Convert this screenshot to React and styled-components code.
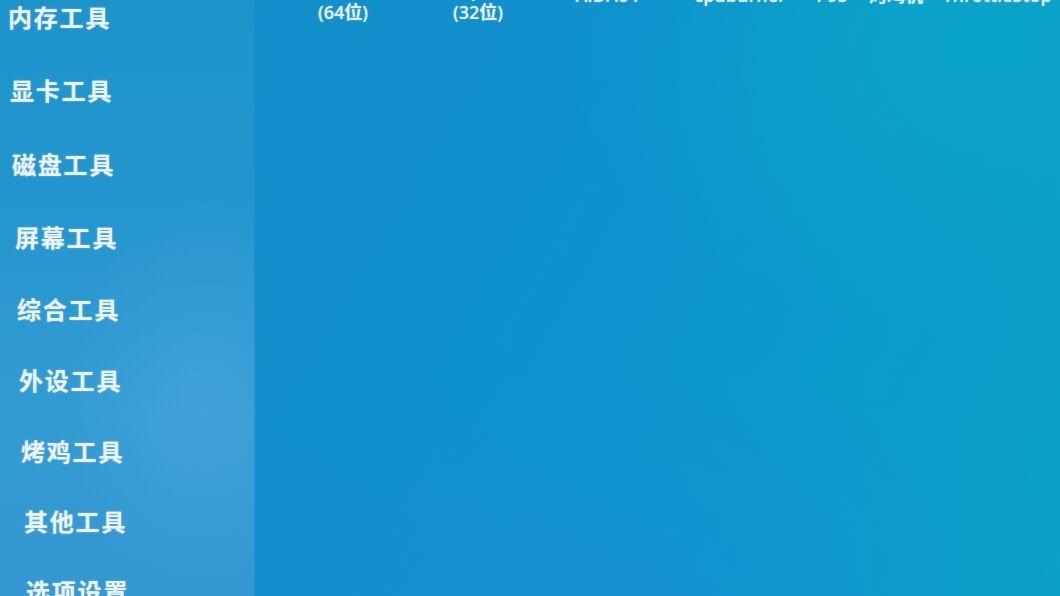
import React from "react";
import styled, { createGlobalStyle } from "styled-components";

const Global = createGlobalStyle`
  html, body { margin: 0; padding: 0; height: 100%; overflow: hidden; }
  body { background: #1190cb; }
  #root { height: 100%; }
`;

const Screen = styled.div`
  width: 1060px;
  height: 596px;
  display: flex;
  overflow: hidden;
  font-family: "Noto Sans CJK SC", "Noto Sans", sans-serif;
  background:
    radial-gradient(ellipse 420px 300px at 980px 40px, rgba(10, 166, 200, 0.85), rgba(10, 166, 200, 0) 100%),
    radial-gradient(ellipse 500px 260px at 620px 620px, rgba(28, 140, 210, 0.55), rgba(28, 140, 210, 0) 100%),
    linear-gradient(120deg, #168fc9 0%, #0f90cd 45%, #0b9bca 80%, #0aa2c6 100%);
`;

const Sidebar = styled.nav`
  width: 255px;
  flex: 0 0 255px;
  display: flex;
  flex-direction: column;
  margin-top: -21px;
  background:
    radial-gradient(ellipse 140px 200px at 205px 420px, rgba(110, 185, 232, 0.22), rgba(110, 185, 232, 0) 100%),
    linear-gradient(180deg, #1d93ca 0%, #2596cf 40%, #349bd3 70%, #3497d1 100%);
  box-shadow: inset -1px 0 0 rgba(20, 120, 180, 0.25);
`;

const NavItem = styled.div`
  height: ${(p) => p.$pitch}px;
  flex: 0 0 auto;
  display: flex;
  align-items: center;
  padding-left: ${(p) => p.$indent}px;
  font-size: 24px;
  font-weight: 700;
  letter-spacing: 1.8px;
  color: #eaf3f7;
  text-shadow: 0 0 2px rgba(255, 255, 255, 0.45);
  white-space: nowrap;
`;

const Main = styled.main`
  flex: 1;
  display: flex;
  flex-direction: column;
`;

const ToolRow = styled.div`
  display: flex;
  align-items: flex-start;
  margin-top: -21px;
  padding-left: 28px;
  height: 46px;
`;

const Tool = styled.div`
  width: ${(p) => p.$w}px;
  flex: 0 0 auto;
  display: flex;
  flex-direction: column;
  align-items: center;
  padding-top: ${(p) => (p.$single ? 5 : 0)}px;
  text-align: center;
  font-family: "Open Sans", "Noto Sans CJK SC", sans-serif;
  font-size: 18px;
  font-weight: 600;
  line-height: 22px;
  color: #e6f1f6;
  text-shadow: 0 0 2px rgba(255, 255, 255, 0.4);
  white-space: nowrap;
`;

const navItems = [
  { label: "内存工具", indent: 8, pitch: 74 },
  { label: "显卡工具", indent: 10, pitch: 73 },
  { label: "磁盘工具", indent: 12, pitch: 74 },
  { label: "屏幕工具", indent: 15, pitch: 72 },
  { label: "综合工具", indent: 17, pitch: 72 },
  { label: "外设工具", indent: 19, pitch: 71 },
  { label: "烤鸡工具", indent: 21, pitch: 70 },
  { label: "其他工具", indent: 24, pitch: 70 },
  { label: "选项设置", indent: 26, pitch: 70 },
];

const tools = [
  { lines: ["Prime95", "(64位)"], w: 120 },
  { lines: ["Linpack", "(32位)"], w: 150 },
  { lines: ["AIDA64"], w: 108 },
  { lines: ["cpuburner"], w: 158 },
  { lines: ["P95"], w: 26 },
  { lines: ["烤鸡机"], w: 102 },
  { lines: ["ThrottleStop"], w: 100 },
];

export default function App() {
  return (
    <>
      <Global />
      <Screen>
        <Sidebar>
          {navItems.map((n) => (
            <NavItem key={n.label} $indent={n.indent} $pitch={n.pitch}>
              {n.label}
            </NavItem>
          ))}
        </Sidebar>
        <Main>
          <ToolRow>
            {tools.map((t) => (
              <Tool key={t.lines[0]} $w={t.w} $single={t.lines.length === 1}>
                {t.lines.map((l) => (
                  <span key={l}>{l}</span>
                ))}
              </Tool>
            ))}
          </ToolRow>
        </Main>
      </Screen>
    </>
  );
}
